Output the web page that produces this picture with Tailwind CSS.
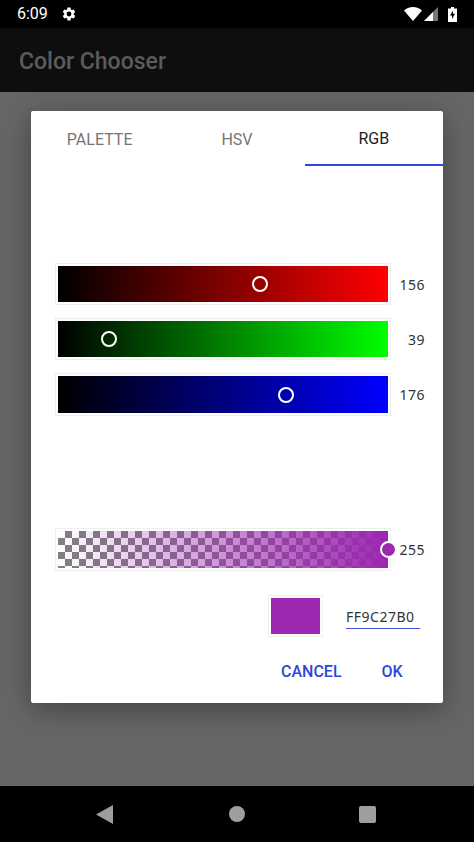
<!DOCTYPE html>
<html lang="en">
<head>
    <meta charset="UTF-8">
    <meta name="viewport" content="width=device-width, initial-scale=1.0">
    <title>Color Chooser</title>
    <script src="https://cdn.jsdelivr.net/npm/@tailwindcss/browser@4"></script>
</head>
<body class="bg-[#666666] font-['Roboto',sans-serif]">
<div class="w-[474px] h-[842px] flex flex-col overflow-hidden">

    <!-- Status bar -->
    <div class="h-[28px] bg-black flex items-center pl-[17px] pr-[17px] shrink-0">
        <span class="text-white text-[16px] leading-none">6:09</span>
        <svg class="ml-[13px]" width="16" height="16" viewBox="0 0 24 24" fill="#fff"><path d="M19.14 12.94c.04-.3.06-.61.06-.94s-.02-.64-.07-.94l2.03-1.58a.5.5 0 0 0 .12-.61l-1.92-3.32a.5.5 0 0 0-.59-.22l-2.39.96a7 7 0 0 0-1.62-.94l-.36-2.54a.48.48 0 0 0-.48-.41h-3.84a.48.48 0 0 0-.47.41l-.36 2.54c-.59.24-1.13.57-1.62.94l-2.39-.96a.48.48 0 0 0-.59.22L2.74 8.87a.48.48 0 0 0 .12.61l2.03 1.58c-.05.3-.09.63-.09.94s.02.64.07.94l-2.03 1.58a.5.5 0 0 0-.12.61l1.92 3.32c.12.22.37.29.59.22l2.39-.96c.5.38 1.03.7 1.62.94l.36 2.54c.05.24.24.41.48.41h3.84c.24 0 .44-.17.47-.41l.36-2.54c.59-.24 1.13-.56 1.62-.94l2.39.96c.22.08.47 0 .59-.22l1.92-3.32a.48.48 0 0 0-.12-.61l-2.01-1.58zM12 15.600A3.600 3.600 0 1 1 12 8.400a3.600 3.600 0 0 1 0 7.200z"/></svg>
        <div class="ml-auto flex items-center">
            <svg width="18" height="14" viewBox="0 0 18 14"><path d="M0 3.500C2.300 1.400 5.500 0 9 0s6.700 1.400 9 3.500L9 14z" fill="#fff"/></svg>
            <svg class="ml-[2px]" width="15" height="14" viewBox="0 0 15 14"><path d="M14 0v14H0z" fill="#777"/><path d="M9 5v9H0z" fill="#fff"/></svg>
            <svg class="ml-[9px]" width="9" height="15" viewBox="0 0 9 15"><path d="M3 0h3v1.500h3V15H0V1.500h3z" fill="#fff"/><path d="M5 3.500 2 8.500h2v3.500l3-5.200H5z" fill="#000"/></svg>
        </div>
    </div>

    <!-- App bar -->
    <div class="h-[64px] bg-[#0e0e0e] flex items-center pl-[19px] pt-[2px] shrink-0">
        <h1 class="text-[#5c5c5c] text-[23px] font-medium leading-none">Color Chooser</h1>
    </div>

    <!-- Dimmed content with dialog -->
    <div class="flex-1 pt-[19px] px-[31px]">
        <div class="h-[592px] bg-white rounded-[2px] shadow-[0_6px_28px_rgba(0,0,0,0.35)] flex flex-col">

            <!-- Tabs -->
            <div class="grid grid-cols-3 h-[55px] text-[16px]">
                <div class="flex items-center justify-center pt-[3px] text-[#757575]">PALETTE</div>
                <div class="flex items-center justify-center pt-[3px] text-[#757575]">HSV</div>
                <div class="flex items-center justify-center pt-[3px] text-[#212121] border-b-2 border-[#2f45dc] -ml-px">RGB</div>
            </div>

            <!-- RGB sliders -->
            <div class="mt-[97px] pl-[24px] pr-[18px] flex flex-col gap-[13px]">
                <div class="flex items-center h-[42px]">
                    <div class="relative w-[336px] h-full p-[2px] border border-[#eeeeee]">
                        <div class="h-full bg-[linear-gradient(to_right,#000,#f00)]"></div>
                        <span class="absolute left-[196px] top-[12px] w-[16px] h-[16px] rounded-full border-2 border-white"></span>
                    </div>
                    <span class="ml-auto font-['Noto_Sans',sans-serif] text-[14px] tracking-[0.5px] text-[#333333]">156</span>
                </div>
                <div class="flex items-center h-[42px]">
                    <div class="relative w-[336px] h-full p-[2px] border border-[#eeeeee]">
                        <div class="h-full bg-[linear-gradient(to_right,#000,#0f0)]"></div>
                        <span class="absolute left-[45px] top-[12px] w-[16px] h-[16px] rounded-full border-2 border-white"></span>
                    </div>
                    <span class="ml-auto font-['Noto_Sans',sans-serif] text-[14px] tracking-[0.5px] text-[#333333]">39</span>
                </div>
                <div class="flex items-center h-[43px]">
                    <div class="relative w-[336px] h-full p-[2px] border border-[#eeeeee]">
                        <div class="h-full bg-[linear-gradient(to_right,#000,#00f)]"></div>
                        <span class="absolute left-[222px] top-[13px] w-[16px] h-[16px] rounded-full border-2 border-white"></span>
                    </div>
                    <span class="ml-auto font-['Noto_Sans',sans-serif] text-[14px] tracking-[0.5px] text-[#333333]">176</span>
                </div>
            </div>

            <!-- Alpha slider -->
            <div class="mt-[112px] pl-[24px] pr-[18px] flex items-center h-[43px]">
                <div class="relative w-[336px] h-full p-[2px] border border-[#eeeeee]">
                    <div class="h-full bg-[conic-gradient(#808080_25%,#fff_0_50%,#808080_0_75%,#fff_0)] bg-size-[14px_14px]">
                        <div class="h-full bg-[linear-gradient(to_right,rgba(156,39,176,0),#9c27b0)]"></div>
                    </div>
                    <span class="absolute left-[324px] top-[12px] w-[17px] h-[17px] rounded-full bg-[#9c27b0] border-2 border-white"></span>
                </div>
                <span class="ml-auto font-['Noto_Sans',sans-serif] text-[14px] tracking-[0.5px] text-[#333333]">255</span>
            </div>

            <!-- Preview and hex input -->
            <div class="mt-[24px] pl-[237px] flex items-start">
                <div class="w-[55px] h-[42px] p-[2px] border border-[#f0f0f0]">
                    <div class="h-full bg-[#9c27b0]"></div>
                </div>
                <div class="ml-[23px] mt-[11px] w-[74px] border-b border-[#3f51e0] h-[23px] font-['Noto_Sans',sans-serif] text-[14px] tracking-[0.5px] leading-[22px] text-[#333333]">FF9C27B0</div>
            </div>

            <!-- Actions -->
            <div class="mt-[27px] pl-[250px] flex items-center text-[16px] font-medium text-[#2f45dc] leading-none">
                <span>CANCEL</span>
                <span class="ml-[40px]">OK</span>
            </div>
        </div>
    </div>

    <!-- Nav bar -->
    <div class="h-[56px] bg-black flex items-center shrink-0 pl-[96px]">
        <svg width="17" height="19" viewBox="0 0 17 19"><path d="M17 0v19L0 9.500z" fill="#9e9e9e"/></svg>
        <span class="ml-[116px] w-[16px] h-[16px] rounded-full bg-[#9e9e9e]"></span>
        <span class="ml-[114px] w-[17px] h-[17px] rounded-[2px] bg-[#9e9e9e]"></span>
    </div>
</div>
</body>
</html>
